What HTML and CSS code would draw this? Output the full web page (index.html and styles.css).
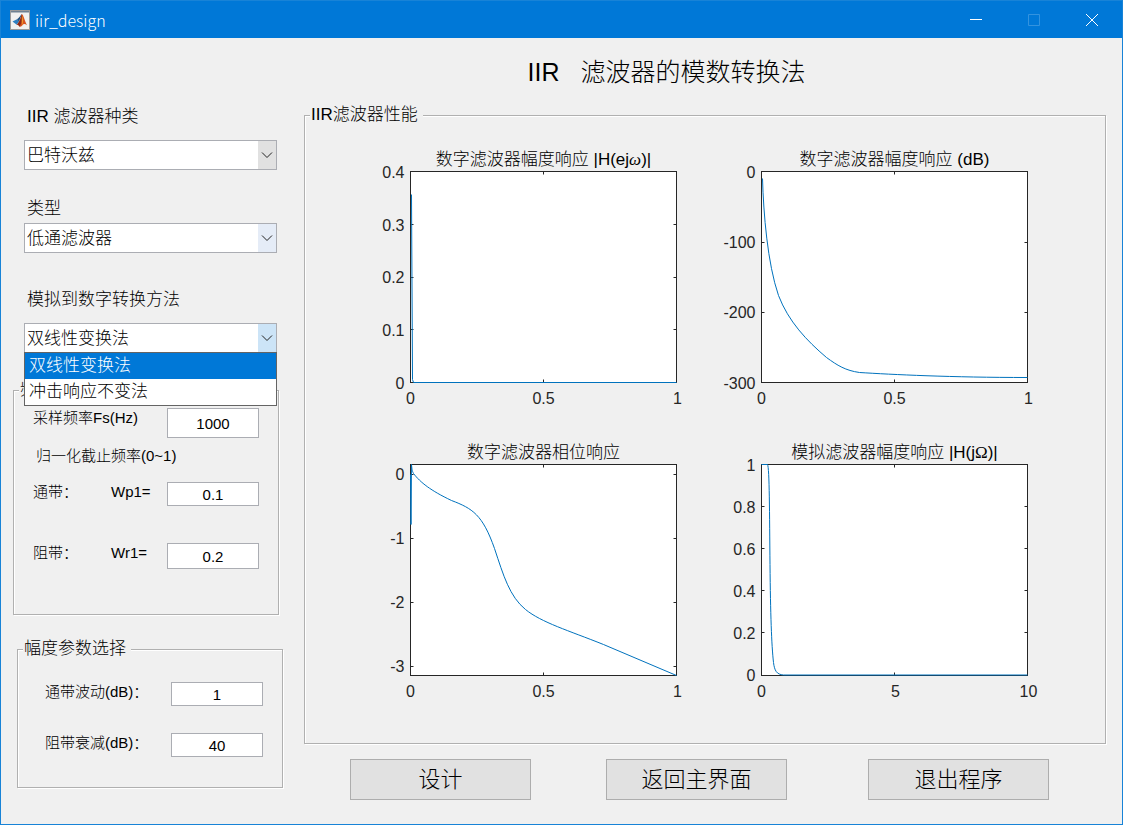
FILE: index.html
```html
<!DOCTYPE html>
<html lang="zh-CN">
<head>
    <meta charset="UTF-8">
    <meta name="viewport" content="width=device-width, initial-scale=1.0">
    <title>iir_design</title>
    <link rel="stylesheet" href="styles.css">
</head>
<body>

    <header class="titlebar">
        <svg class="app-icon" viewBox="0 0 20 20" aria-hidden="true">
            <rect x="0.5" y="0.5" width="19" height="19" fill="#f1f1f0" stroke="#9a9a9a"/>
            <path d="M1 1h18v1.500H1z" fill="#6f8192"/>
            <path d="M2.500 11.500L7 9.300l2 2.400-2.300 3z" fill="#2f7fc0"/>
            <path d="M7 9.300c2-.6 3-3.600 4.800-5.200L9 11.700z" fill="#1d4f80"/>
            <path d="M11.800 4c1.600.4 3 7.200 5.200 11.200-2.200-1.500-3.200-1.600-4.800.2-.9 1-1.800 1.600-2.700 1.300-.6-1.200-1.400-2-2.800-2.100 3-2 4-7 5.100-10.600z" fill="#d9541e"/>
            <path d="M11.800 4c.7 3 .6 8-2.300 12.700-.6-1.200-1.400-2-2.800-2.100 3-2 4-7 5.100-10.600z" fill="#8c2a17"/>
            <path d="M12 5.500c1 2.500 1.200 6 .2 10-.4-3-.6-6-.2-10z" fill="#f6a82c"/>
        </svg>
        <span class="app-name">iir_design</span>
        <div class="window-buttons">
            <button type="button" aria-label="最小化">
                <svg viewBox="0 0 12 12"><path d="M0 5.500h12"/></svg>
            </button>
            <button type="button" aria-label="最大化" disabled>
                <svg viewBox="0 0 12 12"><path d="M.5.5h11v11H.5z"/></svg>
            </button>
            <button type="button" aria-label="关闭">
                <svg viewBox="0 0 12 12"><path d="M0 0l12 12M12 0L0 12"/></svg>
            </button>
        </div>
    </header>

    <main class="container">
        <div class="sidebar">
            <div class="field">
                <label for="kind">IIR 滤波器种类</label>
                <div class="combo">
                    <select id="kind"><option>巴特沃兹</option></select>
                    <span class="arrow"><svg viewBox="0 0 10 6"><path d="M0 .5l5 5 5-5"/></svg></span>
                </div>
            </div>

            <div class="field field-tight">
                <label for="type">类型</label>
                <div class="combo">
                    <select id="type"><option>低通滤波器</option></select>
                    <span class="arrow arrow-light"><svg viewBox="0 0 10 6"><path d="M0 .5l5 5 5-5"/></svg></span>
                </div>
            </div>

            <div class="field">
                <label for="method">模拟到数字转换方法</label>
                <div class="combo">
                    <select id="method"><option>双线性变换法</option></select>
                    <span class="arrow arrow-open"><svg viewBox="0 0 10 6"><path d="M0 .5l5 5 5-5"/></svg></span>
                    <ul class="combo-list" role="listbox" aria-label="模拟到数字转换方法">
                        <li class="selected" role="option" aria-selected="true">双线性变换法</li>
                        <li role="option" aria-selected="false">冲击响应不变法</li>
                    </ul>
                </div>
            </div>

            <fieldset class="panel freq-panel">
                <legend>频率参数选择</legend>
                <div class="panel-body">
                    <div class="row">
                        <label for="fs">采样频率Fs(Hz)</label>
                        <input id="fs" class="tall" type="text" value="1000">
                    </div>
                    <div class="note">归一化截止频率(0~1)</div>
                    <div class="row">
                        <label for="wp1"><span class="band">通带：</span>Wp1=</label>
                        <input id="wp1" type="text" value="0.1">
                    </div>
                    <div class="row row-last">
                        <label for="wr1"><span class="band">阻带：</span>Wr1=</label>
                        <input id="wr1" type="text" value="0.2">
                    </div>
                </div>
            </fieldset>

            <fieldset class="panel amp-panel">
                <legend>幅度参数选择</legend>
                <div class="panel-body">
                    <div class="row">
                        <label for="rp">通带波动(dB)：</label>
                        <input id="rp" type="text" value="1">
                    </div>
                    <div class="row">
                        <label for="rs">阻带衰减(dB)：</label>
                        <input id="rs" type="text" value="40">
                    </div>
                </div>
            </fieldset>
        </div>

        <div class="content">
            <h1>IIR   滤波器的模数转换法</h1>

            <fieldset class="panel plot-panel">
                <legend>IIR滤波器性能</legend>
                <div class="plots">
                    <svg class="plot" viewBox="0 0 351 293">
                        <g transform="translate(50.5 28.5)">
                            <text class="plot-title" x="133" y="-7">数字滤波器幅度响应 |H(ej<tspan class="omega">ω</tspan>)|</text>
                            <rect class="axes" width="266" height="211"/>
                            <path class="ticks" d="M133 0v3M133 211v-3M0 53h3M0 106h3M0 158h3M266 53h-3M266 106h-3M266 158h-3"/>
                            <path class="curve" d="M1 23L2 208L3 211H266"/>
                            <g class="y-labels">
                                <text x="-6" y="6">0.4</text>
                                <text x="-6" y="59">0.3</text>
                                <text x="-6" y="111">0.2</text>
                                <text x="-6" y="164">0.1</text>
                                <text x="-6" y="217">0</text>
                            </g>
                            <g class="x-labels">
                                <text x="0" y="232">0</text>
                                <text x="133" y="232">0.5</text>
                                <text x="267" y="232">1</text>
                            </g>
                        </g>
                    </svg>

                    <svg class="plot" viewBox="0 0 351 293">
                        <g transform="translate(50.5 28.5)">
                            <text class="plot-title" x="133" y="-7">数字滤波器幅度响应 (dB)</text>
                            <rect class="axes" width="266" height="211"/>
                            <path class="ticks" d="M133 0v3M133 211v-3M0 71h3M0 141h3M266 71h-3M266 141h-3"/>
                            <path class="curve" d="M1 7C2 42 6 92 17 124C27 150 45 169 65 186C76 194 84 199 98 201C130 203 190 206 266 206"/>
                            <g class="y-labels">
                                <text x="-6" y="6">0</text>
                                <text x="-6" y="76">-100</text>
                                <text x="-6" y="146">-200</text>
                                <text x="-6" y="217">-300</text>
                            </g>
                            <g class="x-labels">
                                <text x="0" y="232">0</text>
                                <text x="133" y="232">0.5</text>
                                <text x="267" y="232">1</text>
                            </g>
                        </g>
                    </svg>

                    <svg class="plot" viewBox="0 0 351 293">
                        <g transform="translate(50.5 28.5)">
                            <text class="plot-title" x="133" y="-7">数字滤波器相位响应</text>
                            <rect class="axes" width="266" height="211"/>
                            <path class="ticks" d="M133 0v3M133 211v-3M0 10h3M0 74h3M0 138h3M0 202h3M266 10h-3M266 74h-3M266 138h-3M266 202h-3"/>
                            <path class="curve" d="M0 10L.5 60L1 0C1.500 6 2 7 3 9C10 18 20 26 41 36C62 44 72 50 84 84C93 111 99 132 115 145C131 158 158 166 193 180L266 211"/>
                            <g class="y-labels">
                                <text x="-6" y="15">0</text>
                                <text x="-6" y="79">-1</text>
                                <text x="-6" y="143">-2</text>
                                <text x="-6" y="207">-3</text>
                            </g>
                            <g class="x-labels">
                                <text x="0" y="232">0</text>
                                <text x="133" y="232">0.5</text>
                                <text x="267" y="232">1</text>
                            </g>
                        </g>
                    </svg>

                    <svg class="plot" viewBox="0 0 351 293">
                        <g transform="translate(50.5 28.5)">
                            <text class="plot-title" x="133" y="-7">模拟滤波器幅度响应 |H(j<tspan class="greek">Ω</tspan>)|</text>
                            <rect class="axes" width="266" height="211"/>
                            <path class="ticks" d="M133 0v3M133 211v-3M0 42h3M0 84h3M0 126h3M0 168h3M266 42h-3M266 84h-3M266 126h-3M266 168h-3"/>
                            <path class="curve" d="M0 0H6C8 3 8 50 8.500 100C9 150 10 180 12 198C13 206 15 210 22 210.500H266"/>
                            <g class="y-labels">
                                <text x="-6" y="6">1</text>
                                <text x="-6" y="48">0.8</text>
                                <text x="-6" y="90">0.6</text>
                                <text x="-6" y="132">0.4</text>
                                <text x="-6" y="174">0.2</text>
                                <text x="-6" y="216">0</text>
                            </g>
                            <g class="x-labels">
                                <text x="0" y="232">0</text>
                                <text x="134" y="232">5</text>
                                <text x="267" y="232">10</text>
                            </g>
                        </g>
                    </svg>
                </div>
            </fieldset>

            <div class="actions">
                <button type="button">设计</button>
                <button type="button">返回主界面</button>
                <button type="button">退出程序</button>
            </div>
        </div>
    </main>

</body>
</html>
```
FILE: styles.css
```css
* {
    box-sizing: border-box;
}

body {
    font-family: "Liberation Sans", "Noto Sans CJK SC", sans-serif;
    font-size: 17px;
    font-weight: 300;
    color: #000;
    background-color: #f0f0f0;
    margin: 0;
    min-height: 100vh;
    border: 1px solid #1883d7;
    display: flex;
    flex-direction: column;
}

button, input, select {
    font: inherit;
    color: inherit;
    border-radius: 0;
}

/* Title bar */
.titlebar {
    display: flex;
    align-items: center;
    height: 37px;
    padding: 0 1px 0 9px;
    background-color: #0078d7;
    color: #fff;
}

.app-icon {
    width: 20px;
    height: 20px;
}

.app-name {
    flex: 1;
    margin-left: 5px;
    font-family: "Noto Sans CJK SC", sans-serif;
    font-size: 16px;
    line-height: 24px;
}

.window-buttons {
    display: flex;
}

.window-buttons button {
    width: 58px;
    height: 37px;
    padding: 0;
    border: 0;
    background: none;
    display: flex;
    align-items: center;
    justify-content: center;
}

.window-buttons svg {
    width: 12px;
    height: 12px;
    fill: none;
    stroke: #fff;
}

.window-buttons button:disabled svg {
    stroke: #3393df;
}

.container {
    flex: 1;
    display: grid;
    grid-template-columns: 303px 1fr;
    padding-right: 16px;
}

.sidebar {
    padding-top: 66px;
}

/* Drop-downs */
.field {
    width: 253px;
    margin: 0 0 34px 23px;
}

.field label {
    display: block;
    line-height: 26px;
    padding-left: 3px;
    margin-bottom: 10px;
}

.field:first-child {
    margin-bottom: 26px;
}

.field-tight label {
    margin-bottom: 1px;
}

.combo {
    position: relative;
    height: 30px;
}

.combo select {
    appearance: none;
    width: 100%;
    height: 30px;
    padding: 0 24px 0 2px;
    border: 1px solid #abadb3;
    background-color: #fff;
}

.arrow {
    position: absolute;
    top: 1px;
    right: 1px;
    bottom: 1px;
    width: 18px;
    display: flex;
    align-items: center;
    justify-content: center;
    background-color: #e1e1e1;
    pointer-events: none;
}

.arrow-light {
    background-color: #e5ecf7;
}

.arrow-open {
    background-color: #cce4f7;
}

.arrow svg {
    width: 10px;
    height: 6px;
    fill: none;
    stroke: #222;
    overflow: visible;
}

.combo-list {
    position: absolute;
    top: 29px;
    left: 0;
    right: 0;
    z-index: 1;
    margin: 0;
    padding: 0;
    list-style: none;
    border: 1px solid #646464;
    background-color: #fff;
}

.combo-list li {
    padding-left: 4px;
    line-height: 26px;
}

.combo-list .selected {
    background-color: #0078d7;
    color: #fff;
}

/* Etched panels */
.panel {
    min-width: 0;
    margin: 0;
    padding: 0;
    border: 1px solid #b0b0b0;
    box-shadow: 1px 1px 0 #fff, inset 1px 1px 0 #fff;
}

.panel legend {
    margin-left: 5px;
    padding: 0 5px 0 1px;
    line-height: 24px;
    background-color: #f0f0f0;
}

.freq-panel,
.amp-panel {
    width: 266px;
}

.freq-panel {
    margin: -9px 0 22px 12px;
}

.amp-panel {
    margin-left: 16px;
}

.panel-body {
    font-size: 15px;
    line-height: 20px;
}

.freq-panel .panel-body {
    padding: 6px 19px 45px 19px;
}

.amp-panel .panel-body {
    padding: 21px 19px 30px 27px;
}

.row {
    display: grid;
    grid-template-columns: 1fr 92px;
    align-items: start;
}

.row + .row {
    margin-top: 27px;
}

.freq-panel .row-last {
    margin-top: 37px;
}

.row input {
    width: 100%;
    height: 24px;
    padding: 0;
    border: 1px solid #abadb3;
    background-color: #fff;
    text-align: center;
}

.row .tall {
    height: 30px;
}

.row-last input {
    height: 26px;
}

.band {
    display: inline-block;
    width: 78px;
}

.note {
    margin: 8px 0 16px 3px;
}

/* Right side */
.content h1 {
    margin: 16px 77px 13px 0;
    font-size: 25px;
    font-weight: 300;
    line-height: 36px;
    text-align: center;
    white-space: pre;
}

.plots {
    display: grid;
    grid-template-columns: 1fr 1fr;
    padding: 16px 43px 14px 55px;
}

.plot {
    display: block;
    width: 100%;
}

.plot-title {
    font-size: 17px;
    text-anchor: middle;
}

.greek,
.omega {
    font-family: "Liberation Serif", serif;
}

.omega {
    font-style: italic;
}

.axes {
    fill: #fff;
    stroke: #262626;
}

.ticks {
    fill: none;
    stroke: #262626;
}

.curve {
    fill: none;
    stroke: #0072bd;
}

.x-labels,
.y-labels {
    font-size: 16px;
    fill: #262626;
}

.x-labels {
    text-anchor: middle;
}

.y-labels {
    text-anchor: end;
}

.actions {
    display: grid;
    grid-template-columns: 256fr 262fr 181fr;
    padding: 15px 57px 24px 46px;
}

.actions button {
    width: 181px;
    height: 41px;
    padding: 0 0 5px;
    border: 1px solid #adadad;
    background-color: #e1e1e1;
    font-size: 22px;
}
```
